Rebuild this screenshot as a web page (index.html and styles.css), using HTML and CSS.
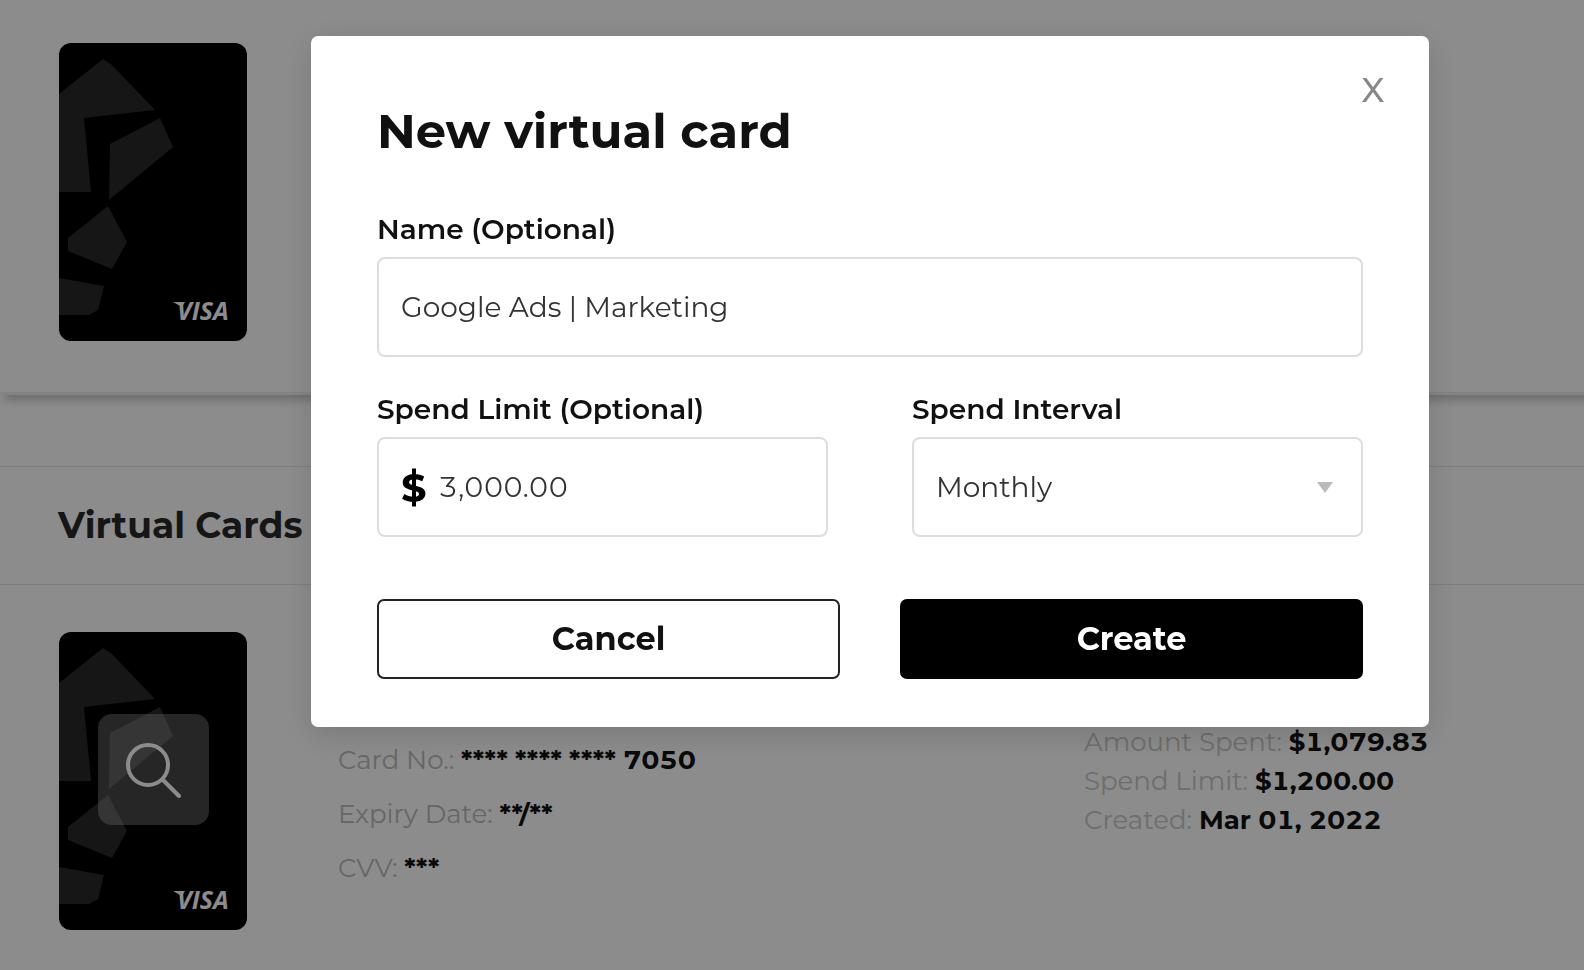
FILE: index.html
```html
<!DOCTYPE html>
<html lang="en">
<head>
    <meta charset="UTF-8">
    <meta name="viewport" content="width=device-width, initial-scale=1.0">
    <title>Virtual Cards</title>
    <link rel="stylesheet" href="styles.css">
</head>
<body>
    <main class="page">
        <section class="main-card">
            <svg class="card-art" viewBox="0 0 188 298" role="img" aria-label="Visa card">
                <rect width="188" height="298" rx="12" fill="#000"/>
                <g fill="#282828">
                    <path d="M0 51L44 16L53 22L96 67L25 75L32 149H0Z"/>
                    <path d="M101 75L114 104L50 157L51 101Z"/>
                    <path d="M49 163L68 199L53 226L9 208V195Z"/>
                    <path d="M0 235L45 243L39 267L30 272H0Z"/>
                </g>
                <path d="M114 259H126L123 264Z" fill="#fff"/>
                <text class="visa" x="118" y="277">VISA</text>
            </svg>
        </section>

        <section class="virtual-cards">
            <h2>Virtual Cards</h2>
            <div class="card-row">
                <div class="card-preview">
                    <svg class="card-art" viewBox="0 0 188 298" role="img" aria-label="Visa card">
                        <rect width="188" height="298" rx="12" fill="#000"/>
                        <g fill="#282828">
                            <path d="M0 51L44 16L53 22L96 67L25 75L32 149H0Z"/>
                            <path d="M101 75L114 104L50 157L51 101Z"/>
                            <path d="M49 163L68 199L53 226L9 208V195Z"/>
                            <path d="M0 235L45 243L39 267L30 272H0Z"/>
                        </g>
                        <path d="M114 259H126L123 264Z" fill="#fff"/>
                        <text class="visa" x="118" y="277">VISA</text>
                    </svg>
                    <button type="button" class="view-card" aria-label="View card">
                        <svg viewBox="0 0 111 111" fill="none" stroke="#fff" stroke-width="4" stroke-linecap="round">
                            <circle cx="50" cy="51" r="20"/>
                            <path d="M65 66L81 82"/>
                        </svg>
                    </button>
                </div>
                <div class="card-details">
                    <p>Card No.: <strong>**** **** **** 7050</strong></p>
                    <p>Expiry Date: <strong>**/**</strong></p>
                    <p>CVV: <strong>***</strong></p>
                </div>
                <div class="card-stats">
                    <p>Amount Spent: <strong>$1,079.83</strong></p>
                    <p>Spend Limit: <strong>$1,200.00</strong></p>
                    <p>Created: <strong>Mar 01, 2022</strong></p>
                </div>
            </div>
        </section>
    </main>

    <div class="overlay">
        <div class="modal" role="dialog" aria-modal="true" aria-labelledby="modal-title">
            <button type="button" class="close" aria-label="Close">X</button>
            <h1 id="modal-title">New virtual card</h1>
            <form>
                <div class="field">
                    <label for="name">Name (Optional)</label>
                    <input type="text" id="name" name="name" class="control" value="Google Ads | Marketing">
                </div>
                <div class="field-row">
                    <div class="field">
                        <label for="limit">Spend Limit (Optional)</label>
                        <div class="control money">
                            <span class="currency">$</span>
                            <input type="text" id="limit" name="limit" value="3,000.00">
                        </div>
                    </div>
                    <div class="field">
                        <label for="interval">Spend Interval</label>
                        <div class="select-wrap">
                            <select id="interval" name="interval" class="control">
                                <option>Monthly</option>
                            </select>
                            <svg class="arrow" viewBox="0 0 16 11"><path d="M0 0H16L8 11Z" fill="#bbb"/></svg>
                        </div>
                    </div>
                </div>
                <div class="actions">
                    <button type="button" class="btn">Cancel</button>
                    <button type="submit" class="btn btn-primary">Create</button>
                </div>
            </form>
        </div>
    </div>
</body>
</html>
```
FILE: styles.css
```css
* {
    box-sizing: border-box;
}
body {
    margin: 0;
    font-family: Montserrat, Inter, sans-serif;
    font-variant-numeric: tabular-nums;
    background-color: #fff;
    color: #111;
    overflow: hidden;
}
h1,
h2,
p {
    margin: 0;
}

/* Page behind the modal */
.page {
    margin-right: -16px;
}
.main-card {
    padding: 43px 59px 51px;
    border-bottom: 3px solid #ecf0f5;
    box-shadow: 0 10px 8px -4px rgba(0, 0, 0, 0.2);
}
.card-art {
    display: block;
    width: 188px;
    height: 298px;
}
.visa {
    font-family: "Open Sans", sans-serif;
    font-size: 25px;
    font-weight: 700;
    font-style: italic;
    fill: #fff;
}
.virtual-cards {
    margin-top: 71px;
    border-top: 1px solid #e6e6e6;
}
.virtual-cards h2 {
    padding: 36px 58px 37px;
    border-bottom: 1px solid #e6e6e6;
    font-size: 36px;
    line-height: 44px;
    color: #282828;
}
.card-row {
    display: grid;
    grid-template-columns: 188px 655px 1fr;
    column-gap: 91px;
    padding: 47px 59px 40px;
    font-size: 26px;
}
.card-preview {
    position: relative;
}
.view-card {
    position: absolute;
    top: 82px;
    left: 39px;
    width: 111px;
    height: 111px;
    padding: 0;
    border: none;
    border-radius: 14px;
    background-color: rgba(255, 255, 255, 0.27);
    cursor: pointer;
}
.view-card svg {
    display: block;
}
.card-details {
    padding-top: 101px;
    line-height: 54px;
    color: #bbb;
}
.card-stats {
    padding-top: 91px;
    line-height: 39px;
    color: #c8c8c8;
    white-space: nowrap;
}
.card-row strong {
    font-weight: 700;
    color: #111;
}

/* Modal */
.overlay {
    position: fixed;
    inset: 0;
    padding: 36px 155px 36px 311px;
    background-color: rgba(0, 0, 0, 0.45);
}
.modal {
    position: relative;
    padding: 65px 66px 48px;
    border-radius: 7px;
    background-color: #fff;
    box-shadow: 0 8px 32px rgba(0, 0, 0, 0.15);
}
.close {
    position: absolute;
    top: 32px;
    right: 34px;
    width: 44px;
    padding: 0;
    border: none;
    background: none;
    font-family: inherit;
    font-size: 34px;
    font-weight: 500;
    line-height: 44px;
    color: #888;
    cursor: pointer;
}
.modal h1 {
    margin-bottom: 50px;
    font-size: 48px;
    line-height: 60px;
}
.field label {
    display: block;
    margin-bottom: 10px;
    font-size: 28px;
    font-weight: 600;
    line-height: 36px;
}
.field-row {
    display: grid;
    grid-template-columns: repeat(2, minmax(0, 1fr));
    gap: 84px;
    margin-top: 34px;
}
.control {
    display: block;
    width: 100%;
    height: 100px;
    padding: 0 22px;
    border: 2px solid #ddd;
    border-radius: 8px;
    background-color: #fff;
    font-family: inherit;
    font-size: 28px;
    font-variant-numeric: inherit;
    color: #333;
}
.money {
    display: flex;
    align-items: center;
    gap: 12px;
}
.money input {
    flex: 1;
    min-width: 0;
    padding: 0;
    border: none;
    font: inherit;
    color: inherit;
}
.currency {
    font-size: 40px;
    font-weight: 700;
    color: #000;
}
.select-wrap {
    position: relative;
}
.select-wrap select {
    appearance: none;
}
.arrow {
    position: absolute;
    top: 45px;
    right: 30px;
    width: 16px;
    height: 11px;
    pointer-events: none;
}
.actions {
    display: grid;
    grid-template-columns: 1fr 1fr;
    gap: 60px;
    margin-top: 62px;
}
.btn {
    height: 80px;
    padding: 0 0 2px;
    border: 2px solid #222;
    border-radius: 7px;
    background-color: #fff;
    font-family: inherit;
    font-size: 32px;
    font-weight: 700;
    color: #111;
    cursor: pointer;
}
.btn-primary {
    border-color: #000;
    background-color: #000;
    color: #fff;
}
```
